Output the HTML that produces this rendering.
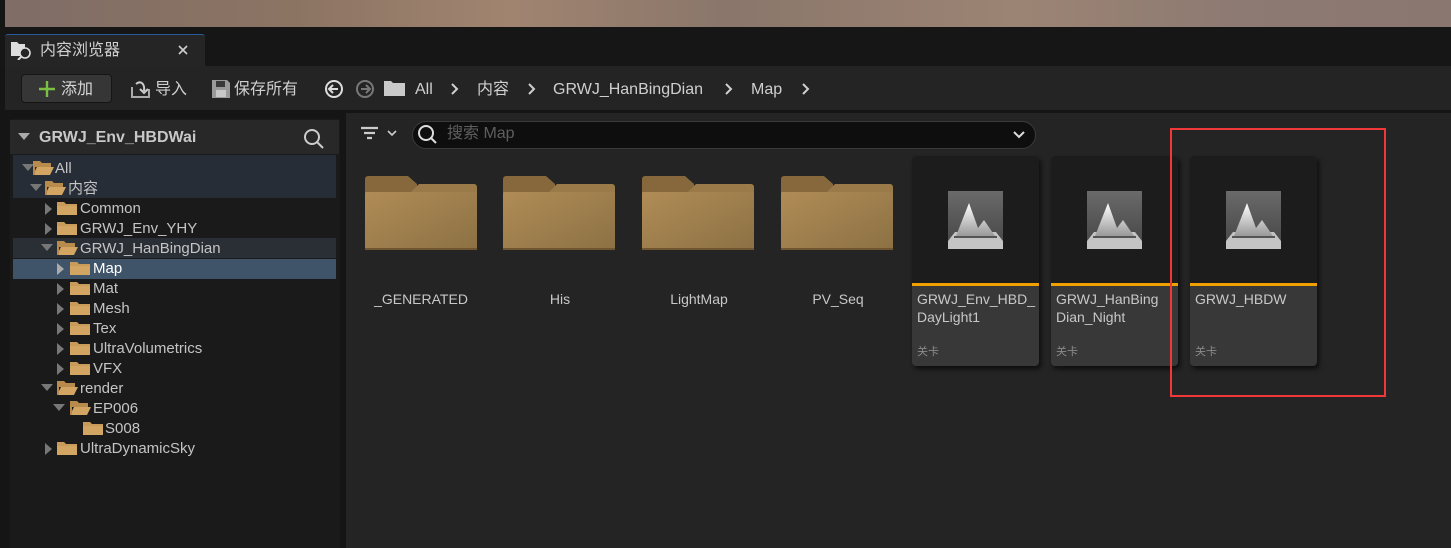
<!DOCTYPE html>
<html><head><meta charset="utf-8"><style>
*{margin:0;padding:0;box-sizing:border-box}
body{width:1451px;height:548px;background:#151515;position:relative;overflow:hidden;font-family:"Liberation Sans","Noto Sans CJK SC",sans-serif;color:#c0c0c0}
.a{position:absolute}
.t{position:absolute;white-space:nowrap;line-height:20px}
.tree .t{font-size:15px;color:#c4c4c4}
.tile{position:absolute;top:156px;width:127px;height:210px;background:#383838;border-radius:4px;box-shadow:2px 3px 4px #0e0e0e}
.tile .th{position:absolute;left:0;top:0;width:127px;height:130px;background:#1c1c1c;border-radius:4px 4px 0 0;border-bottom:3px solid #f0a000}
.tile .n{position:absolute;left:5px;top:134px;font-size:14px;line-height:18px;color:#c8c8c8}
.tile .k{position:absolute;left:5px;top:189px;font-size:11px;line-height:14px;color:#8a8a8a}
.bf{position:absolute;top:175px;width:112px;height:75px}
.fl{position:absolute;top:290px;font-size:14px;line-height:18px;color:#c8c8c8;width:120px;text-align:center}
.tb{top:80px;font-size:16px;color:#cfcfcf}
</style></head><body>
<div class="a" style="left:5px;top:0;width:1446px;height:27px;background:linear-gradient(90deg,#7f6d66 0%,#8c7463 20%,#a08470 35%,#8a766b 50%,#9c8474 70%,#8d7a72 85%,#8a7770 100%)"></div>
<div class="a" style="left:0;top:27px;width:1451px;height:39px;background:#161616"></div>
<div class="a" style="left:5px;top:34px;width:200px;height:32px;background:#252525;border-top:1px solid #2b5a9a;border-radius:3px 3px 0 0"></div>
<svg class="a" style="left:10px;top:40px" width="22" height="20"><path d="M1 2h6l2 2h6v12H1z" fill="#ddd"/><circle cx="15" cy="13" r="5" fill="#252525" stroke="#ddd" stroke-width="1.6"/><path d="M12 16l-4 4" stroke="#ddd" stroke-width="2"/></svg>
<div class="t" style="left:40px;top:41px;font-size:16px;color:#d0d0d0">内容浏览器</div>
<svg class="a" style="left:178px;top:45px" width="10" height="10"><path d="M1 1l8 8M9 1l-8 8" stroke="#cfcfcf" stroke-width="1.6"/></svg>
<div class="a" style="left:5px;top:66px;width:1446px;height:44px;background:#242424"></div>
<div class="a" style="left:21px;top:74px;width:91px;height:29px;background:#363636;border:1px solid #151515;border-radius:4px"></div>
<svg class="a" style="left:38px;top:80px" width="18" height="18"><path d="M9 1v16M1 9h16" stroke="#7bc043" stroke-width="2.4"/></svg>
<div class="t tb" style="left:61px;color:#d6d6d6">添加</div>
<svg class="a" style="left:130px;top:78px" width="22" height="22"><path d="M2 9v10h17v-8" fill="none" stroke="#aaa" stroke-width="2"/><path d="M6 6c5-4 9 0 8 7M10 11l4 4 4-4" fill="none" stroke="#ccc" stroke-width="2"/></svg>
<div class="t tb" style="left:155px">导入</div>
<svg class="a" style="left:212px;top:80px" width="18" height="18"><path d="M0 0h15l3 3v15H0z" fill="#9a9a9a"/><rect x="4" y="1" width="9" height="6" fill="#3a3a3a"/><rect x="4" y="10" width="10" height="7" fill="#c8c8c8"/></svg>
<div class="t tb" style="left:234px">保存所有</div>
<svg class="a" style="left:324px;top:79px" width="20" height="20"><circle cx="10" cy="10" r="8" fill="none" stroke="#ddd" stroke-width="2"/><path d="M14 10H6M9 6l-4 4 4 4" fill="none" stroke="#ddd" stroke-width="2"/></svg>
<svg class="a" style="left:355px;top:79px" width="20" height="20"><circle cx="10" cy="10" r="8" fill="none" stroke="#777" stroke-width="2"/><path d="M6 10h8M11 6l4 4-4 4" fill="none" stroke="#777" stroke-width="2"/></svg>
<svg class="a" style="left:384px;top:80px" width="21" height="16"><path d="M0 1h7l2 2h12v13H0z" fill="#c9c9c9"/></svg>
<div class="t tb" style="left:415px">All</div>
<div class="t tb" style="left:477px">内容</div>
<div class="t tb" style="left:553px">GRWJ_HanBingDian</div>
<div class="t tb" style="left:751px">Map</div>
<svg class="a" style="left:0;top:81px" width="820" height="16"><g fill="none" stroke="#cfcfcf" stroke-width="2"><path d="M452 3l5 5-5 5"/><path d="M529 3l5 5-5 5"/><path d="M726 3l5 5-5 5"/><path d="M803 3l5 5-5 5"/></g></svg>

<div class="a" style="left:10px;top:119px;width:330px;height:429px;background:#1a1a1a"></div>
<div class="a" style="left:10px;top:120px;width:329px;height:34px;background:#282828"></div>
<svg class="a" style="left:18px;top:133px" width="12" height="8"><path d="M0 0h12L6 7z" fill="#aaa"/></svg>
<div class="t" style="left:39px;top:128px;font-size:16px;font-weight:bold;color:#c8c8c8">GRWJ_Env_HBDWai</div>
<svg class="a" style="left:303px;top:128px" width="22" height="22"><circle cx="9" cy="9" r="7" fill="none" stroke="#ccc" stroke-width="2"/><path d="M14 14l6 6" stroke="#ccc" stroke-width="2"/></svg>
<div class="a" style="left:13px;top:155px;width:323px;height:43px;background:#272d36"></div>
<div class="a" style="left:13px;top:238px;width:323px;height:20px;background:#2a2f36"></div>
<div class="a" style="left:13px;top:259px;width:323px;height:20px;background:#3f5469"></div>
<svg class="a tree" style="left:0;top:0" width="340" height="548">
<defs>
<g id="fo"><path d="M0 2h7l2 2h11v11H0z" fill="#c89b5a"/><path d="M0 6h20v9H0z" fill="#d2a563"/></g>
<g id="fop"><path d="M0 1h7l2 2h9v4H0z" fill="#b88a4c"/><path d="M0 15L4 7h17l-4 8z" fill="#d2a563"/><path d="M0 1h2v14H0z" fill="#b88a4c"/></g>
<path id="ad" d="M0 0h12L6 7z" fill="#777"/>
<path id="ar" d="M0 0l7 6-7 6z" fill="#777"/>
</defs>
<use href="#ad" x="22" y="164"/><use href="#fop" x="33" y="160"/>
<use href="#ad" x="30" y="184"/><use href="#fop" x="45" y="180"/>
<use href="#ar" x="45" y="203"/><use href="#fo" x="57" y="200"/>
<use href="#ar" x="45" y="223"/><use href="#fo" x="57" y="220"/>
<use href="#ad" x="41" y="244"/><use href="#fop" x="57" y="240"/>
<path d="M57 263l7 6-7 6z" fill="#aaa"/><use href="#fo" x="70" y="260"/>
<use href="#ar" x="57" y="283"/><use href="#fo" x="70" y="280"/>
<use href="#ar" x="57" y="303"/><use href="#fo" x="70" y="300"/>
<use href="#ar" x="57" y="323"/><use href="#fo" x="70" y="320"/>
<use href="#ar" x="57" y="343"/><use href="#fo" x="70" y="340"/>
<use href="#ar" x="57" y="363"/><use href="#fo" x="70" y="360"/>
<use href="#ad" x="41" y="384"/><use href="#fop" x="57" y="380"/>
<use href="#ad" x="53" y="404"/><use href="#fop" x="70" y="400"/>
<use href="#fo" x="83" y="420"/>
<use href="#ar" x="45" y="443"/><use href="#fo" x="57" y="440"/>
</svg>
<div class="tree">
<div class="t" style="left:55px;top:159px">All</div>
<div class="t" style="left:68px;top:179px">内容</div>
<div class="t" style="left:80px;top:199px">Common</div>
<div class="t" style="left:80px;top:219px">GRWJ_Env_YHY</div>
<div class="t" style="left:80px;top:239px">GRWJ_HanBingDian</div>
<div class="t" style="left:93px;top:259px;color:#fff">Map</div>
<div class="t" style="left:93px;top:279px">Mat</div>
<div class="t" style="left:93px;top:299px">Mesh</div>
<div class="t" style="left:93px;top:319px">Tex</div>
<div class="t" style="left:93px;top:339px">UltraVolumetrics</div>
<div class="t" style="left:93px;top:359px">VFX</div>
<div class="t" style="left:80px;top:379px">render</div>
<div class="t" style="left:93px;top:399px">EP006</div>
<div class="t" style="left:105px;top:419px">S008</div>
<div class="t" style="left:80px;top:439px">UltraDynamicSky</div>
</div>

<div class="a" style="left:346px;top:113px;width:1105px;height:435px;background:#242424"></div>
<svg class="a" style="left:360px;top:126px" width="40" height="16"><path d="M1 2h17M4 7h11M7 12h5" stroke="#ccc" stroke-width="2.2"/><path d="M28 5l4 4 4-4" fill="none" stroke="#ccc" stroke-width="1.6"/></svg>
<div class="a" style="left:412px;top:121px;width:624px;height:28px;background:#0e0e0e;border:1px solid #3a3a3a;border-radius:14px"></div>
<svg class="a" style="left:417px;top:124px" width="22" height="22"><circle cx="9" cy="9" r="7" fill="none" stroke="#ddd" stroke-width="2"/><path d="M14 14l5 5" stroke="#ddd" stroke-width="2"/></svg>
<div class="t" style="left:447px;top:124px;font-size:16px;color:#5e5e5e">搜索 Map</div>
<svg class="a" style="left:1012px;top:130px" width="14" height="10"><path d="M2 2l5 5 5-5" fill="none" stroke="#ddd" stroke-width="2"/></svg>

<svg width="0" height="0" style="position:absolute"><defs>
<linearGradient id="fg" x1="0" y1="0" x2="1" y2="1"><stop offset="0" stop-color="#b08c56"/><stop offset="1" stop-color="#8c7144"/></linearGradient>
<g id="bf"><path d="M0 4a3 3 0 0 1 3-3h40l9 8v67H0z" fill="#86683c"/><path d="M0 18h110a2 2 0 0 1 2 2v-8a3 3 0 0 0-3-3H54l-8 8H0z" fill="#9a7a48"/><rect x="0" y="17" width="112" height="58" rx="2" fill="url(#fg)"/><rect x="0" y="73" width="112" height="2" fill="#6f5630"/></g>
<linearGradient id="mg" x1="0" y1="0" x2="0" y2="1"><stop offset="0" stop-color="#6a6a6a"/><stop offset="1" stop-color="#444"/></linearGradient>
<linearGradient id="mt" x1="0" y1="0" x2="0" y2="1"><stop offset="0" stop-color="#fff"/><stop offset="1" stop-color="#999"/></linearGradient>
<g id="mi"><rect x="0" y="0" width="55" height="58" fill="url(#mg)"/><path d="M0 50l7-9h41l7 9v8H0z" fill="#c4c4c4"/><path d="M8 45L21 12l9 25 6-8 11 16z" fill="url(#mt)"/><path d="M6 46h43" stroke="#555" stroke-width="2"/></g>
</defs></svg>
<svg class="bf" style="left:365px"><use href="#bf"/></svg>
<svg class="bf" style="left:503px"><use href="#bf"/></svg>
<svg class="bf" style="left:642px"><use href="#bf"/></svg>
<svg class="bf" style="left:781px"><use href="#bf"/></svg>
<div class="fl" style="left:361px">_GENERATED</div>
<div class="fl" style="left:500px">His</div>
<div class="fl" style="left:639px">LightMap</div>
<div class="fl" style="left:778px">PV_Seq</div>

<div class="tile" style="left:912px"><div class="th"><svg style="position:absolute;left:36px;top:35px" width="56" height="58"><use href="#mi"/></svg></div><div class="n">GRWJ_Env_HBD_<br>DayLight1</div><div class="k">关卡</div></div>
<div class="tile" style="left:1051px"><div class="th"><svg style="position:absolute;left:36px;top:35px" width="56" height="58"><use href="#mi"/></svg></div><div class="n">GRWJ_HanBing<br>Dian_Night</div><div class="k">关卡</div></div>
<div class="tile" style="left:1190px"><div class="th"><svg style="position:absolute;left:36px;top:35px" width="56" height="58"><use href="#mi"/></svg></div><div class="n">GRWJ_HBDW</div><div class="k">关卡</div></div>
<div class="a" style="left:1170px;top:128px;width:216px;height:269px;border:2px solid #f03838"></div>
</body></html>
